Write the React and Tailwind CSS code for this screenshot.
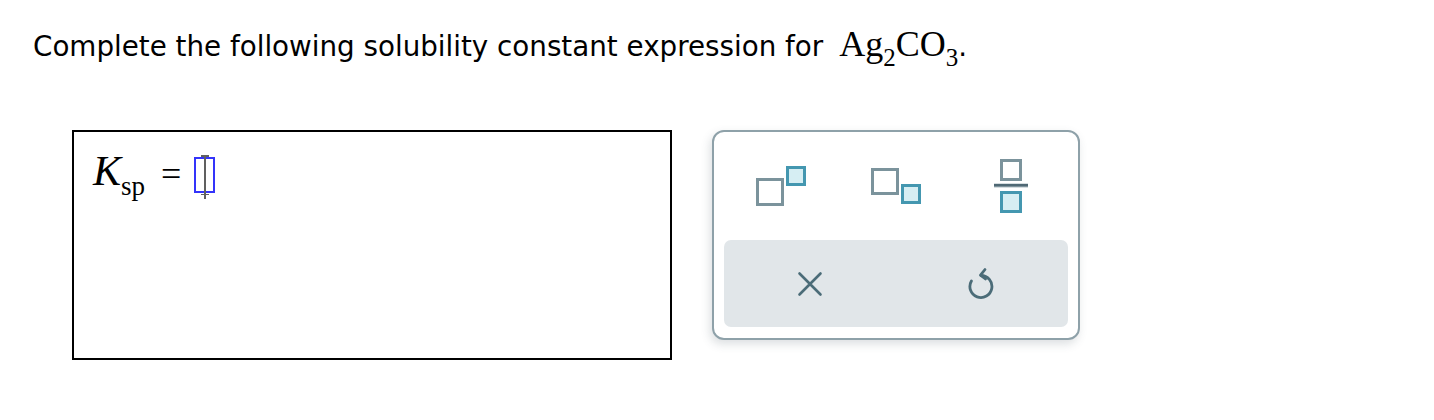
import React from "react";

function SuperscriptIcon() {
  return (
    <svg width="50" height="40" viewBox="0 0 50 40">
      <rect x="1.5" y="13.5" width="25" height="25" fill="none" stroke="#7b939c" strokeWidth="3" />
      <rect x="31.5" y="1.5" width="17" height="17" fill="#d6eef3" stroke="#4497b0" strokeWidth="3" />
    </svg>
  );
}

function SubscriptIcon() {
  return (
    <svg width="50" height="36" viewBox="0 0 50 36">
      <rect x="1.5" y="1.5" width="25" height="24" fill="none" stroke="#7b939c" strokeWidth="3" />
      <rect x="31.5" y="17.5" width="17" height="17" fill="#d6eef3" stroke="#4497b0" strokeWidth="3" />
    </svg>
  );
}

function FractionIcon() {
  return (
    <svg width="34" height="54" viewBox="0 0 34 54">
      <rect x="7.5" y="1.5" width="19" height="19" fill="none" stroke="#7b939c" strokeWidth="3" />
      <rect x="0" y="24.5" width="34" height="4" fill="#aebcc2" />
      <rect x="0" y="25" width="34" height="2.5" fill="#4f6874" />
      <rect x="7.5" y="33.5" width="19" height="19" fill="#d6eef3" stroke="#4497b0" strokeWidth="3" />
    </svg>
  );
}

function ClearIcon() {
  return (
    <svg width="26" height="26" viewBox="0 0 26 26">
      <path d="M2.5 2.5 L23.5 23.5 M23.5 2.5 L2.5 23.5" stroke="#4b6c78" strokeWidth="2.6" strokeLinecap="round" fill="none" />
    </svg>
  );
}

function UndoIcon() {
  return (
    <svg width="28" height="34" viewBox="0 0 28 34">
      <path d="M13 8.5 A11 11 0 1 1 3.4 14" stroke="#4b6c78" strokeWidth="2.8" strokeLinecap="round" fill="none" />
      <path d="M17 2.5 L12.5 8.2 L17.5 12" stroke="#4b6c78" strokeWidth="2.8" strokeLinecap="round" strokeLinejoin="round" fill="none" />
    </svg>
  );
}

export default function App() {
  return (
    <div className="bg-white w-[1434px] h-[420px] text-black">
      <div className="h-[130px] pl-[33px] pt-[24px]">
        <div className="flex items-baseline leading-[40px]">
          <span className="font-['DejaVu_Sans',sans-serif] text-[27.75px]">
            Complete the following solubility constant expression for
          </span>
          <span className="ml-[16px] font-['Liberation_Serif',serif] text-[36px]">
            Ag
            <sub className="text-[25px] relative top-[10px] align-baseline">2</sub>
            CO
            <sub className="text-[25px] relative top-[10px] align-baseline">3</sub>
          </span>
          <span className="font-['DejaVu_Sans',sans-serif] text-[27.75px]">.</span>
        </div>
      </div>

      <div className="flex pl-[72px] gap-[40px]">
        <div className="w-[600px] h-[230px] border-2 border-black">
          <div className="flex items-start pl-[19px] pt-[15px] font-['Liberation_Serif',serif]">
            <div className="flex items-baseline">
              <span className="italic text-[42px] leading-[48px]">K</span>
              <span className="text-[27px] relative top-[10px]">sp</span>
            </div>
            <span className="text-[36px] leading-[48px] ml-[16px] mt-[3px]">=</span>
            <div className="ml-[13px] mt-[10px] relative w-[21px] h-[36px] border-2 border-[#3434fa]">
              <div className="absolute left-[8px] -top-[4px] w-[1.5px] h-[44px] bg-[#606060]" />
              <div className="absolute left-[5px] -top-[4px] w-[8px] h-[1.5px] bg-[#606060]" />
              <div className="absolute left-[5px] -bottom-[4px] w-[8px] h-[1.5px] bg-[#606060]" />
            </div>
          </div>
        </div>

        <div className="w-[368px] h-[210px] border-2 border-[#8ea1a9] rounded-[12px] bg-white shadow-[-2px_4px_10px_rgba(60,80,90,0.18)] px-[10px] pb-[11px] flex flex-col">
          <div className="h-[108px] grid grid-cols-3 items-center justify-items-center">
            <button className="flex items-center justify-center"><SuperscriptIcon /></button>
            <button className="flex items-center justify-center"><SubscriptIcon /></button>
            <button className="flex items-center justify-center"><FractionIcon /></button>
          </div>
          <div className="flex-1 bg-[#e1e6e9] rounded-[7px] grid grid-cols-2 items-center justify-items-center">
            <button className="flex items-center justify-center"><ClearIcon /></button>
            <button className="flex items-center justify-center"><UndoIcon /></button>
          </div>
        </div>
      </div>
    </div>
  );
}
